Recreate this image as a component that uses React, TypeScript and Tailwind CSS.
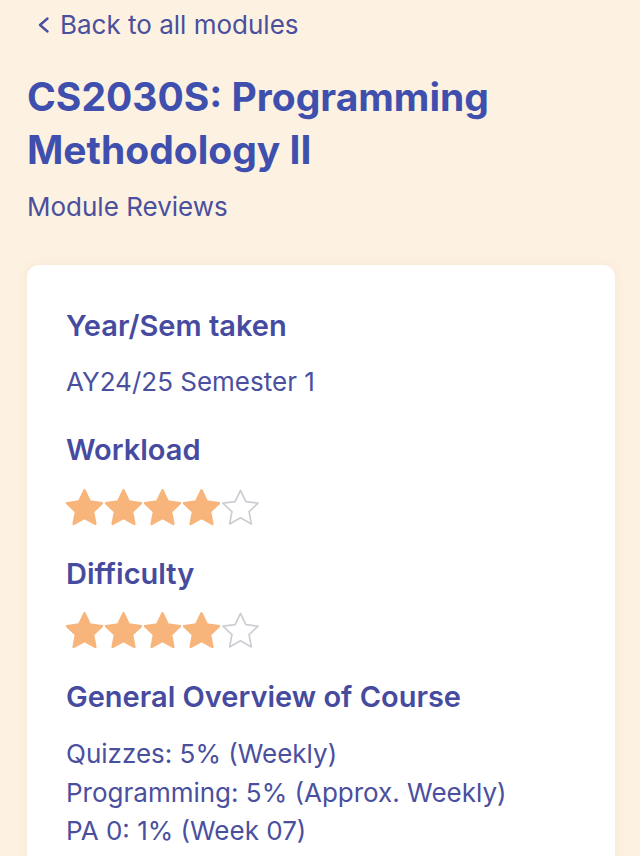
function Stars({ value }: { value: number }) {
  return (
    <div className="flex h-[36px] items-center gap-[2px]">
      {[0, 1, 2, 3, 4].map((i) => (
        <svg key={i} viewBox="2.3 2.2 19.4 19.4" className="h-[37px] w-[37px]">
          <path
            d="M12 2.9l2.8 5.9 6.4.8-4.7 4.5 1.2 6.4L12 17.3l-5.7 3.2 1.2-6.4-4.7-4.5 6.4-.8z"
            fill={i < value ? '#f8b57b' : 'none'}
            stroke={i < value ? '#f8b57b' : '#cdcdd3'}
            strokeWidth={i < value ? 1.3 : 0.9}
            strokeLinejoin="round"
          />
        </svg>
      ))}
    </div>
  );
}

export default function App() {
  return (
    <div className="min-h-[856px] bg-[#fdf1e1] font-['Inter',sans-serif] text-[#4a4f9e]">
      <div className="px-[27px] pt-[10px]">
        <a className="flex items-center gap-[8px] pl-[9px] text-[26px] leading-[30px] text-[#4a4f9e]">
          <svg viewBox="0 0 16 18" className="h-[18px] w-[16px]">
            <polyline
              points="11.5,2.5 4,9 11.5,15.5"
              fill="none"
              stroke="currentColor"
              strokeWidth={2.4}
              strokeLinecap="round"
              strokeLinejoin="round"
            />
          </svg>
          Back to all modules
        </a>
        <h1 className="mt-[30px] text-[39px] font-bold leading-[53px] text-[#3f4fae]">
          CS2030S: Programming
          <br />
          Methodology II
        </h1>
        <p className="mt-[16px] text-[26px] leading-[30px]">Module Reviews</p>
      </div>

      <div className="ml-[27px] mr-[25px] mt-[43px] rounded-[12px] bg-white px-[39px] pt-[44px] pb-[40px] shadow-[0_0_8px_rgba(230,200,170,0.25)]">
        <h2 className="text-[29px] font-semibold leading-[34px] text-[#464b9f]">Year/Sem taken</h2>
        <p className="mt-[24px] text-[26px] leading-[30px]">AY24/25 Semester 1</p>

        <h2 className="mt-[36px] text-[29px] font-semibold leading-[34px] text-[#464b9f]">Workload</h2>
        <div className="mt-[22px]">
          <Stars value={4} />
        </div>

        <h2 className="mt-[32px] text-[29px] font-semibold leading-[34px] text-[#464b9f]">Difficulty</h2>
        <div className="mt-[21px]">
          <Stars value={4} />
        </div>

        <h2 className="mt-[32px] text-[29px] font-semibold leading-[34px] text-[#464b9f]">
          General Overview of Course
        </h2>
        <div className="mt-[21px] text-[26px] leading-[38.5px]">
          <p>Quizzes: 5% (Weekly)</p>
          <p>Programming: 5% (Approx. Weekly)</p>
          <p>PA 0: 1% (Week 07)</p>
        </div>
      </div>
    </div>
  );
}
